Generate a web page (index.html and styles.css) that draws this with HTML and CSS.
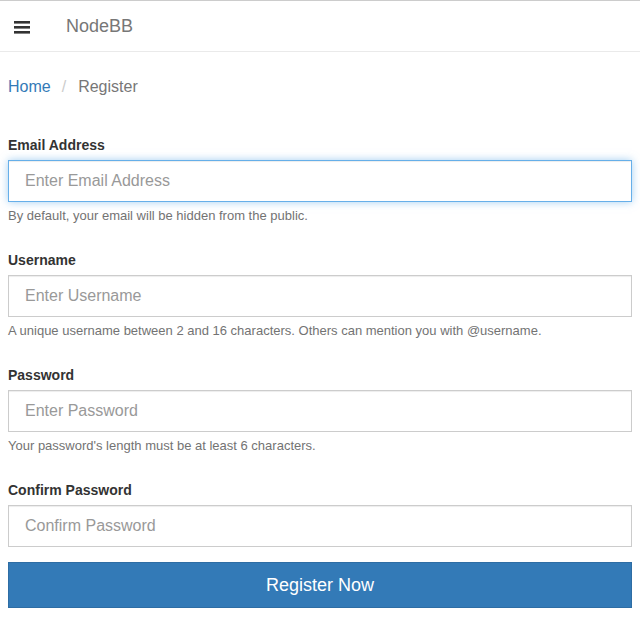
FILE: index.html
```html
<!DOCTYPE html>
<html>
<head>
  <meta charset="UTF-8">
  <title>Register | NodeBB</title>
  <link rel="stylesheet" href="styles.css">
</head>
<body>
  <nav class="navbar">
    <button class="menu-toggle" aria-label="Menu">
      <svg width="16" height="14" viewBox="0 0 16 14">
        <rect x="0" y="1" width="16" height="2.6" fill="#333"/>
        <rect x="0" y="6" width="16" height="2.6" fill="#333"/>
        <rect x="0" y="11" width="16" height="2.6" fill="#333"/>
      </svg>
    </button>
    <span class="brand">NodeBB</span>
  </nav>

  <div class="container">
    <ol class="breadcrumb">
      <li><a href="#">Home</a></li>
      <li class="active">Register</li>
    </ol>

    <form class="register-form">
      <div class="form-group">
        <label for="email">Email Address</label>
        <input type="email" id="email" class="form-control focused" placeholder="Enter Email Address">
        <span class="help-block">By default, your email will be hidden from the public.</span>
      </div>

      <div class="form-group">
        <label for="username">Username</label>
        <input type="text" id="username" class="form-control" placeholder="Enter Username">
        <span class="help-block">A unique username between 2 and 16 characters. Others can mention you with @username.</span>
      </div>

      <div class="form-group">
        <label for="password">Password</label>
        <input type="password" id="password" class="form-control" placeholder="Enter Password">
        <span class="help-block">Your password's length must be at least 6 characters.</span>
      </div>

      <div class="form-group last">
        <label for="password-confirm">Confirm Password</label>
        <input type="password" id="password-confirm" class="form-control" placeholder="Confirm Password">
      </div>

      <button type="button" class="btn-primary">Register Now</button>
    </form>
  </div>
</body>
</html>
```

FILE: styles.css
```css
* {
  box-sizing: border-box;
}

body {
  font-family: "Liberation Sans", Arial, Helvetica, sans-serif;
  margin: 0;
  background-color: #fff;
  color: #333;
  font-size: 14px;
}

.navbar {
  display: flex;
  align-items: center;
  height: 52px;
  border-top: 1px solid #ccc;
  border-bottom: 1px solid #eaeaea;
  background-color: #fff;
}

.menu-toggle {
  display: flex;
  align-items: center;
  background: none;
  border: none;
  padding: 0;
  margin-left: 14px;
  margin-top: 1px;
  cursor: pointer;
}

.brand {
  margin-left: 36px;
  font-size: 18px;
  color: #777;
  line-height: 20px;
}

.container {
  padding: 0 8px;
}

.breadcrumb {
  list-style: none;
  display: flex;
  margin: 24px 0 0;
  padding: 0;
  font-size: 16px;
  line-height: 22px;
}

.breadcrumb li + li::before {
  content: "/";
  color: #ccc;
  padding: 0 12px 0 11px;
}

.breadcrumb a {
  color: #337ab7;
  text-decoration: none;
}

.breadcrumb .active {
  color: #777;
}

.register-form {
  margin-top: 37px;
}

.form-group {
  margin-bottom: 25px;
}

.form-group.last {
  margin-bottom: 15px;
}

label {
  display: block;
  font-weight: bold;
  line-height: 20px;
  margin-bottom: 5px;
}

.form-control {
  display: block;
  width: 100%;
  height: 42px;
  padding: 10px 16px;
  font-family: inherit;
  font-size: 16px;
  color: #555;
  border: 1px solid #ccc;
  border-radius: 0;
  outline: none;
  box-shadow: inset 0 1px 1px rgba(0, 0, 0, 0.075);
}

.form-control::placeholder {
  color: #999;
}

.form-control.focused {
  border-color: #66afe9;
  box-shadow: inset 0 1px 1px rgba(0, 0, 0, 0.075), 0 0 8px rgba(102, 175, 233, 0.6);
}

.help-block {
  display: block;
  margin-top: 5px;
  font-size: 13px;
  line-height: 18px;
  color: #737373;
}

.btn-primary {
  display: block;
  width: 100%;
  height: 46px;
  background-color: #337ab7;
  border: 1px solid #2e6da4;
  border-radius: 0;
  color: #fff;
  font-family: inherit;
  font-size: 18px;
  cursor: pointer;
}
```
